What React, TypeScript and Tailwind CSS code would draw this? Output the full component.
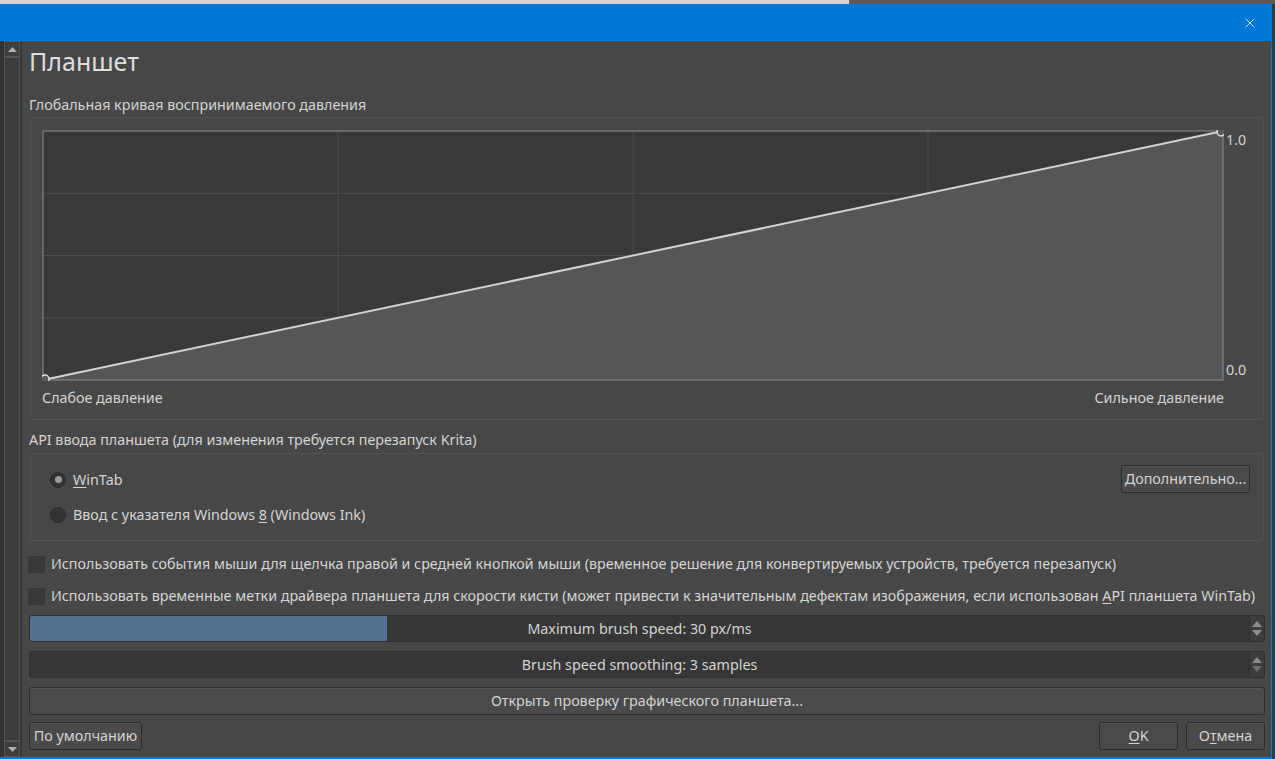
import { X } from "lucide-react";

const FONT = { fontFamily: '"Noto Sans", "Open Sans", sans-serif' };

// Pressure curve preview: grid, filled area under the line and end handles
function CurvePlot() {
  const w = 1180;
  const h = 249;
  return (
    <svg width={w + 2} height={h + 2} viewBox={`-1 -1 ${w + 2} ${h + 2}`} className="block">
      <rect x={0} y={0} width={w} height={h} fill="#393939" />
      {[1, 2, 3].map((i) => (
        <line key={`v${i}`} x1={(w / 4) * i} y1={0} x2={(w / 4) * i} y2={h} stroke="#4b4b4b" strokeWidth={1} />
      ))}
      {[1, 2, 3].map((i) => (
        <line key={`h${i}`} x1={0} y1={(h / 4) * i} x2={w} y2={(h / 4) * i} stroke="#4b4b4b" strokeWidth={1} />
      ))}
      <polygon points={`0,${h} ${w},0 ${w},${h}`} fill="#565656" />
      <line x1={0} y1={h} x2={w} y2={0} stroke="#d2d2d2" strokeWidth={2} />
      <rect x={0} y={0} width={w} height={h} fill="none" stroke="#8c8c8c" strokeWidth={1} />
      <circle cx={2} cy={h - 1} r={4} fill="#5a5a5a" stroke="#e0e0e0" strokeWidth={1.5} />
      <circle cx={w - 2} cy={1} r={4} fill="#5a5a5a" stroke="#e0e0e0" strokeWidth={1.5} />
    </svg>
  );
}

function Radio({ checked, children }: { checked?: boolean; children: React.ReactNode }) {
  return (
    <div className="flex items-center gap-[7px]">
      <span className="flex h-4 w-4 items-center justify-center rounded-full bg-[#333333] border border-[#2c2c2c]">
        {checked && <span className="h-[7px] w-[7px] rounded-full bg-[#9a9a9a]" />}
      </span>
      <span>{children}</span>
    </div>
  );
}

function Checkbox({ children }: { children: React.ReactNode }) {
  return (
    <div className="flex items-center gap-[6px] -ml-px">
      <span className="h-[17px] w-[17px] rounded-[2px] bg-[#383838]" />
      <span>{children}</span>
    </div>
  );
}

function SpinArrows({ dim }: { dim?: boolean }) {
  const c = dim ? "#6e6e6e" : "#8e8e8e";
  return (
    <div className="flex w-[15px] flex-col items-center justify-center gap-[3px] border-l border-[#2e2e2e] bg-[#3c3c3c]">
      <svg width="10" height="6" viewBox="0 0 10 6">
        <polygon points="0,6 5,0 10,6" fill="#8e8e8e" />
      </svg>
      <svg width="10" height="6" viewBox="0 0 10 6">
        <polygon points="0,0 10,0 5,6" fill={c} />
      </svg>
    </div>
  );
}

function SliderSpin({ label, fill }: { label: string; fill: number }) {
  return (
    <div className="flex h-[27px] overflow-hidden rounded-[3px] border border-[#2e2e2e] bg-[#363636]">
      <div className="relative flex flex-1 items-center justify-center">
        <div className="absolute inset-y-0 left-0 bg-[#52708f]" style={{ width: `${fill}px` }} />
        <span className="relative">{label}</span>
      </div>
      <SpinArrows dim={fill === 0} />
    </div>
  );
}

function Button({ children, className = "" }: { children: React.ReactNode; className?: string }) {
  return (
    <div
      className={`flex h-[28px] items-center justify-center rounded-[3px] border border-[#2c2c2c] bg-[#4a4a4a] shadow-[inset_0_1px_0_#555555] ${className}`}
    >
      {children}
    </div>
  );
}

export default function App() {
  return (
    <div className="flex h-[759px] w-[1275px] flex-col overflow-hidden bg-[#3a3a3a] text-[14.3px] text-[#d4d4d4]" style={FONT}>
      {/* strip of the window behind */}
      <div className="flex h-[4px] shrink-0">
        <div className="w-[849px] bg-[#d6d6d6]" />
        <div className="flex-1 bg-[#5a5a5a]" />
      </div>

      <div className="flex flex-1 min-h-0">
        <div className="flex w-[1272px] flex-col border-r border-b-2 border-[#0078d7]">
          {/* title bar */}
          <div className="flex h-[37px] shrink-0 items-center justify-end bg-[#0078d7] pr-[13px]">
            <X size={16} strokeWidth={1.2} className="text-white" />
          </div>

          <div className="flex min-h-0 flex-1">
            {/* page list scrollbar */}
            <div className="flex w-[22px] shrink-0 bg-[#363636]">
              <div className="w-[4px] bg-[#323232]" />
              <div className="flex w-[16px] flex-col">
                <div className="flex h-[16px] items-center justify-center border border-[#555555] bg-[#3e3e3e]">
                  <svg width="9" height="5" viewBox="0 0 9 5">
                    <polygon points="0,5 4.5,0 9,5" fill="#b0b0b0" />
                  </svg>
                </div>
                <div className="flex-1 border border-[#555555] bg-[#3c3c3c]" />
                <div className="flex h-[16px] items-center justify-center border border-[#555555] bg-[#3e3e3e]">
                  <svg width="9" height="5" viewBox="0 0 9 5">
                    <polygon points="0,0 9,0 4.5,5" fill="#b0b0b0" />
                  </svg>
                </div>
              </div>
            </div>

            {/* settings page */}
            <div className="flex min-w-0 flex-1 flex-col bg-[#474747] pl-[7px] pr-[6px]">
              <div className="pt-[2px] text-[25px] leading-[36px] text-[#dedede]">Планшет</div>

              <div className="mt-[17px] leading-[18px]">Глобальная кривая воспринимаемого давления</div>
              <div className="mt-[3px] ml-px mr-[1px] rounded-[3px] border border-[#525252] pl-[11px] pr-[8px] pt-[12px] pb-[12px]">
                <div className="flex items-stretch">
                  <CurvePlot />
                  <div className="ml-[2px] flex flex-col justify-between pb-[2px] leading-[18px]">
                    <span className="mt-[1px]">1.0</span>
                    <span>0.0</span>
                  </div>
                </div>
                <div className="mt-[8px] flex w-[1182px] justify-between leading-[18px]">
                  <span>Слабое давление</span>
                  <span>Сильное давление</span>
                </div>
              </div>

              <div className="mt-[11px] leading-[18px]">API ввода планшета (для изменения требуется перезапуск Krita)</div>
              <div className="mt-[4px] ml-px mr-[1px] flex h-[88px] rounded-[3px] border border-[#525252] pl-[19px] pr-[13px]">
                <div className="flex flex-col justify-center gap-[16px] leading-[19px]">
                  <Radio checked>
                    <span className="underline underline-offset-2">W</span>inTab
                  </Radio>
                  <Radio>
                    Ввод с указателя Windows <span className="underline underline-offset-2">8</span> (Windows Ink)
                  </Radio>
                </div>
                <div className="flex-1" />
                <Button className="mt-[11px] w-[129px]">Дополнительно...</Button>
              </div>

              <div className="mt-[14px] flex flex-col gap-[14px] leading-[18px]">
                <Checkbox>
                  Использовать события мыши для щелчка правой и средней кнопкой мыши (временное решение для конвертируемых устройств, требуется перезапуск)
                </Checkbox>
                <Checkbox>
                  Использовать временные метки драйвера планшета для скорости кисти (может привести к значительным дефектам изображения, если использован <span className="underline underline-offset-2">A</span>PI планшета WinTab)
                </Checkbox>
              </div>

              <div className="mt-[10px] flex flex-col gap-[9px]">
                <SliderSpin label="Maximum brush speed: 30 px/ms" fill={357} />
                <SliderSpin label="Brush speed smoothing: 3 samples" fill={0} />
                <Button className="h-[28px]">Открыть проверку графического планшета...</Button>
              </div>

              <div className="mt-[7px] flex items-center">
                <Button className="w-[113px]">По умолчанию</Button>
                <div className="flex-1" />
                <Button className="w-[79px]">
                  <span className="underline underline-offset-2">O</span>K
                </Button>
                <Button className="ml-[8px] w-[79px]">
                  O<span className="underline underline-offset-2">т</span>мена
                </Button>
              </div>
            </div>
          </div>
        </div>
        <div className="w-[3px] bg-[#2f3a40]" />
      </div>
    </div>
  );
}
